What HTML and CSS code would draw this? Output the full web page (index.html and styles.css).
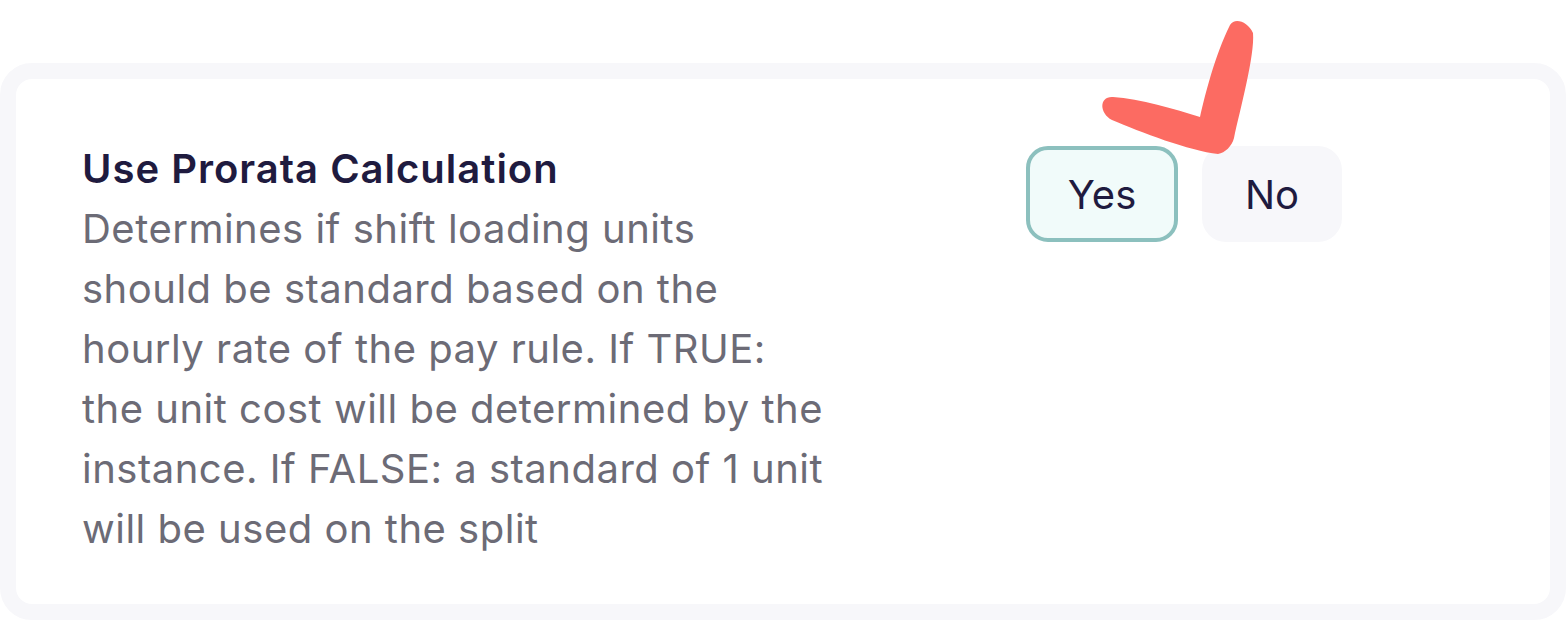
FILE: index.html
```html
<!DOCTYPE html>
<html lang="en">
<head>
<meta charset="utf-8">
<title>Use Prorata Calculation</title>
<link rel="stylesheet" href="styles.css">
</head>
<body>
  <div class="page">
    <section class="card">
      <div class="setting">
        <div class="setting-text">
          <h2 class="setting-title">Use Prorata Calculation</h2>
          <p class="setting-desc">Determines if shift loading units should be standard based on the hourly rate of the pay rule. If TRUE: the unit cost will be determined by the instance. If FALSE: a standard of 1 unit will be used on the split</p>
        </div>
        <div class="choice">
          <button class="choice-btn is-selected" type="button">Yes</button>
          <button class="choice-btn" type="button">No</button>
        </div>
      </div>
    </section>
    <svg class="check-mark" width="170" height="150" viewBox="1095 12 170 150" aria-hidden="true">
      <path d="M1113,97 C1140,99 1175,109 1200,117 C1205,95 1215,55 1230,25 C1235,17 1248,22 1253,33 C1255,55 1240,110 1234,138 C1232,146 1225,153 1218,154 C1190,151 1140,132 1112,120 C1099,113 1099,96 1113,97 Z" fill="#fc6b62"/>
    </svg>
  </div>
</body>
</html>
```

FILE: styles.css
```css
* {
  box-sizing: border-box;
}

html, body {
  margin: 0;
  padding: 0;
  background: #ffffff;
}

body {
  font-family: Inter, "Noto Sans", "Liberation Sans", sans-serif;
  width: 1566px;
  height: 621px;
  overflow: hidden;
}

.page {
  position: relative;
  padding-top: 63px;
}

.card {
  border: 16px solid #f7f7fa;
  border-radius: 32px;
  background: #ffffff;
  padding: 60px 66px 45px;
}

.setting {
  display: grid;
  grid-template-columns: 752px auto;
  column-gap: 192px;
  align-items: start;
}

.setting-title {
  margin: 0;
  font-size: 40px;
  line-height: 60px;
  font-weight: 600;
  letter-spacing: 1px;
  color: #1f1b3f;
}

.setting-desc {
  margin: 0;
  font-size: 40px;
  line-height: 60px;
  font-weight: 400;
  letter-spacing: 0.5px;
  color: #6c6b76;
}

.choice {
  display: flex;
  gap: 24px;
  margin-top: 7px;
}

.choice-btn {
  font-family: inherit;
  font-size: 40px;
  font-weight: 400;
  color: #1f1b3f;
  height: 96px;
  width: 140px;
  border: none;
  border-radius: 24px;
  background: #f7f7fa;
  padding: 0;
  display: flex;
  align-items: center;
  justify-content: center;
}

.choice-btn.is-selected {
  width: 152px;
  border: 4px solid #8cc0be;
  border-radius: 22px;
  background: #f1fbfa;
}

.check-mark {
  position: absolute;
  left: 1095px;
  top: 12px;
  pointer-events: none;
}
```
